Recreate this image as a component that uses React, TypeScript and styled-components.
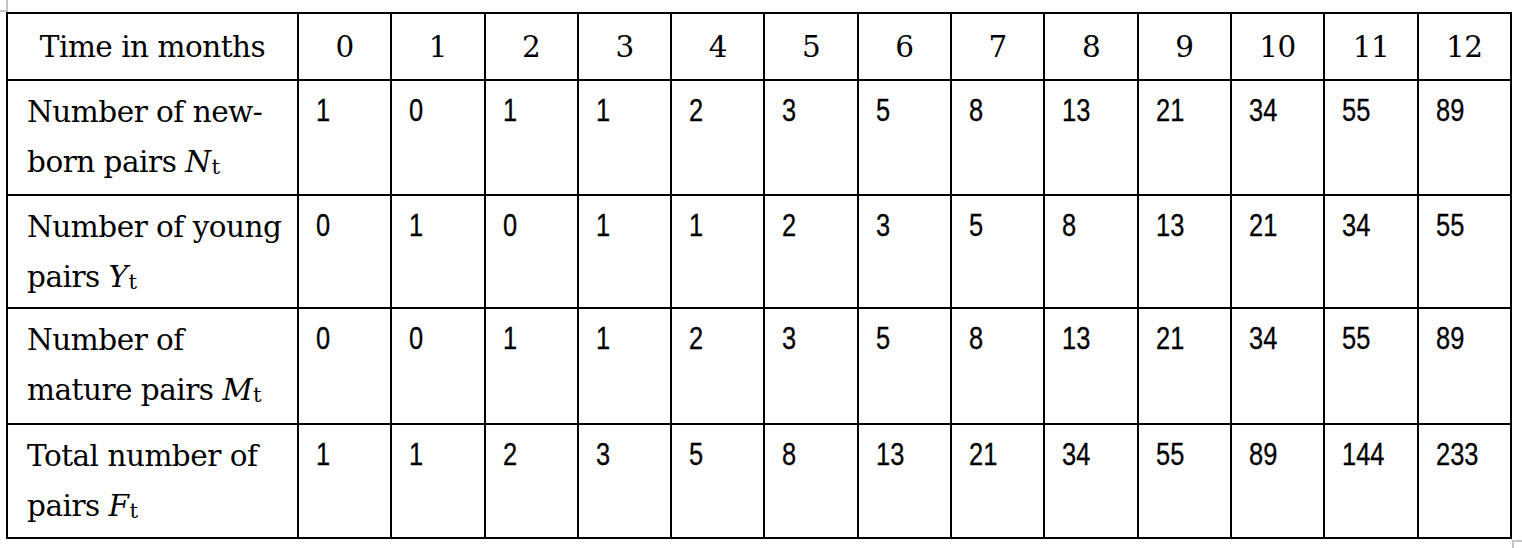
import { FC, ReactNode } from "react";
import styled, { createGlobalStyle } from "styled-components";

const GlobalStyle = createGlobalStyle`
    html, body {
        margin: 0;
        padding: 0;
        background: #ffffff;
    }
`;

const Page = styled.div`
    position: relative;
    width: 1522px;
    height: 548px;
    padding: 12px 0 0 6px;
    box-sizing: border-box;
    overflow: hidden;
`;

const CropMark = styled.span<{ $corner: "tl" | "br" }>`
    position: absolute;
    width: 6px;
    height: 10px;
    border-color: #c4c4c4;
    border-style: solid;
    ${({ $corner }) =>
        $corner === "tl"
            ? "top: 0; left: 0; border-width: 0 2px 2px 0;"
            : "bottom: 0; right: 0; border-width: 2px 0 0 2px; width: 8px; height: 6px;"}
`;

const Table = styled.table`
    border-collapse: collapse;
    table-layout: fixed;
    width: 1506px;
    color: #000000;
`;

const Row = styled.tr<{ $height: number }>`
    height: ${({ $height }) => $height}px;
`;

const Cell = styled.td`
    border: 2px solid #000000;
    padding: 0;
    box-sizing: border-box;
`;

const HeadCell = styled(Cell)`
    font-family: "DejaVu Serif", "Liberation Serif", serif;
    font-size: 29.5px;
    letter-spacing: -0.5px;
    text-align: center;
    vertical-align: middle;
    padding-top: 1px;
`;

const LabelCell = styled(Cell)`
    font-family: "DejaVu Serif", "Liberation Serif", serif;
    font-size: 29.5px;
    letter-spacing: -0.5px;
    line-height: 50px;
    text-align: left;
    vertical-align: top;
    padding: 6px 0 0 19px;
`;

const ValueCell = styled(Cell)`
    font-family: "Liberation Sans", Arial, sans-serif;
    font-size: 31px;
    line-height: 34px;
    text-align: left;
    vertical-align: top;
    padding: 13px 0 0 17px;
`;

const Narrow = styled.span`
    display: inline-block;
    transform: scaleX(0.82);
    transform-origin: left center;
    -webkit-text-stroke: 0.3px #000000;
`;

const Var = styled.i`
    font-style: italic;
`;

const Sub = styled.span`
    font-size: 0.72em;
    font-style: normal;
    vertical-align: -0.08em;
    margin-left: 1px;
`;

const months = [0, 1, 2, 3, 4, 5, 6, 7, 8, 9, 10, 11, 12];

type Series = {
    first: string;
    second: string;
    symbol: string;
    values: number[];
    height: number;
};

const series: Series[] = [
    {
        first: "Number of new-",
        second: "born pairs",
        symbol: "N",
        values: [1, 0, 1, 1, 2, 3, 5, 8, 13, 21, 34, 55, 89],
        height: 115,
    },
    {
        first: "Number of young",
        second: "pairs",
        symbol: "Y",
        values: [0, 1, 0, 1, 1, 2, 3, 5, 8, 13, 21, 34, 55],
        height: 113,
    },
    {
        first: "Number of",
        second: "mature pairs",
        symbol: "M",
        values: [0, 0, 1, 1, 2, 3, 5, 8, 13, 21, 34, 55, 89],
        height: 116,
    },
    {
        first: "Total number of",
        second: "pairs",
        symbol: "F",
        values: [1, 1, 2, 3, 5, 8, 13, 21, 34, 55, 89, 144, 233],
        height: 114,
    },
];

const Symbol: FC<{ children: ReactNode }> = ({ children }) => (
    <>
        <Var>{children}</Var>
        <Sub>t</Sub>
    </>
);

const App: FC = () => {
    return (
        <Page>
            <GlobalStyle />
            <CropMark $corner="tl" />
            <Table>
                <colgroup>
                    <col style={{ width: 291 }} />
                    {months.map((m) => (
                        <col key={m} />
                    ))}
                </colgroup>
                <tbody>
                    <Row $height={67}>
                        <HeadCell>Time in months</HeadCell>
                        {months.map((m) => (
                            <HeadCell key={m}>{m}</HeadCell>
                        ))}
                    </Row>
                    {series.map((s) => (
                        <Row $height={s.height} key={s.symbol}>
                            <LabelCell>
                                {s.first}
                                <br />
                                {s.second} <Symbol>{s.symbol}</Symbol>
                            </LabelCell>
                            {s.values.map((v, i) => (
                                <ValueCell key={i}>
                                    <Narrow>{v}</Narrow>
                                </ValueCell>
                            ))}
                        </Row>
                    ))}
                </tbody>
            </Table>
            <CropMark $corner="br" />
        </Page>
    );
};

export default App;
